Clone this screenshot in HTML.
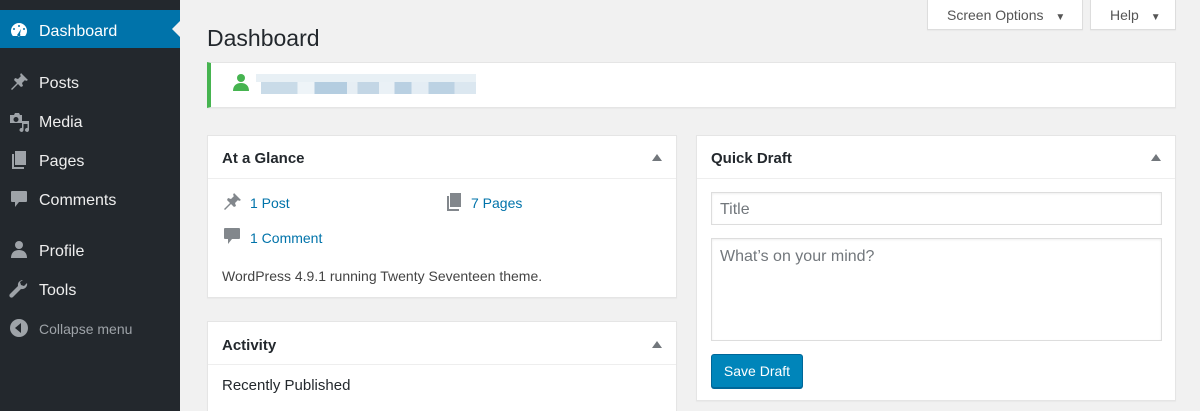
<!DOCTYPE html>
<html style="height:411px;overflow:hidden"><head><style>
*{margin:0;padding:0;box-sizing:border-box}
body{width:1200px;height:411px;overflow:hidden;background:#f1f1f1;font-family:"Liberation Sans",sans-serif;position:relative;color:#23282d}
.a{position:absolute}
#side{left:0;top:0;width:180px;height:411px;background:#23282d}
.mi{position:absolute;left:39px;color:#eee;font-size:16px}
.ic{position:absolute;left:9px;fill:#9ea3a8}
.box{position:absolute;background:#fff;border:1px solid #e5e5e5;box-shadow:0 1px 1px rgba(0,0,0,.04)}
.hd{position:absolute;left:14px;font-size:15px;font-weight:bold;color:#23282d}
.line{position:absolute;left:0;right:0;height:1px;background:#eee}
.tri{position:absolute;width:0;height:0;border-left:5px solid transparent;border-right:5px solid transparent;border-bottom:7px solid #72777c}
.lk{position:absolute;color:#0073aa;font-size:14px}
.btn{position:absolute;background:#fff;border:1px solid #ddd;border-top:none;color:#555;font-size:14px;box-shadow:0 1px 1px rgba(0,0,0,.04)}
</style></head><body>
<div id="side" class="a">
 <div class="a" style="left:0;top:10px;width:180px;height:38px;background:#0073aa"></div>
 <div class="a" style="left:172px;top:21px;width:0;height:0;border-top:8px solid transparent;border-bottom:8px solid transparent;border-right:8px solid #f1f1f1"></div>
 <svg class="ic" style="top:20px;fill:#fff" width="20" height="20" viewBox="0 0 20 20"><path d="M10 3a8 8 0 0 0-8 8c0 2 .7 3.7 1.9 5h12.2A8 8 0 0 0 18 11a8 8 0 0 0-8-8zm0 2a1 1 0 1 1 0 2 1 1 0 0 1 0-2zM5 8a1 1 0 1 1 0 2 1 1 0 0 1 0-2zm10 0a1 1 0 1 1 0 2 1 1 0 0 1 0-2zm-3 1l-1 5a1.5 1.5 0 1 1-2-.3z"/></svg>
 <div class="mi" style="top:23px;color:#fff">Dashboard</div>
 <svg class="ic" style="top:72px" width="20" height="20" viewBox="0 0 20 20"><path d="M12 1l7 7-2 1-1-1-3 3 1 3-2 1-3-3-6 6-1-1 6-6-3-3 1-2 3 1 3-3-1-1z"/></svg>
 <div class="mi" style="top:75px">Posts</div>
 <svg class="ic" style="top:111px" width="22" height="22" viewBox="0 0 22 22"><path d="M1 4h4l1-2h4l1 2h2v8H1zM7 6a2.5 2.5 0 1 0 0 5 2.5 2.5 0 0 0 0-5zM13 10h7v9a2 2 0 1 1-1.5-2V13h-4v6a2 2 0 1 1-1.5-2z"/></svg>
 <div class="mi" style="top:114px">Media</div>
 <svg class="ic" style="top:150px" width="20" height="20" viewBox="0 0 20 20"><path d="M6 1h11v14H6zM3 4h2v13h10v2H3z"/></svg>
 <div class="mi" style="top:153px">Pages</div>
 <svg class="ic" style="top:189px" width="20" height="20" viewBox="0 0 20 20"><path d="M3 2h14a1 1 0 0 1 1 1v9a1 1 0 0 1-1 1h-7l-4 5v-5H3a1 1 0 0 1-1-1V3a1 1 0 0 1 1-1z"/></svg>
 <div class="mi" style="top:192px">Comments</div>
 <svg class="ic" style="top:240px" width="20" height="20" viewBox="0 0 20 20"><circle cx="10" cy="5" r="4"/><path d="M2 18c0-5 3-8 8-8s8 3 8 8z"/></svg>
 <div class="mi" style="top:243px">Profile</div>
 <svg class="ic" style="top:279px" width="20" height="20" viewBox="0 0 20 20"><path d="M14 1a5 5 0 0 0-5 6L1 15a2 2 0 0 0 3 3l8-8a5 5 0 0 0 6-6l-3 3-3-1-1-3z"/></svg>
 <div class="mi" style="top:282px">Tools</div>
 <svg class="ic" style="top:318px" width="20" height="20" viewBox="0 0 20 20"><circle cx="10" cy="10" r="9"/><path d="M12 5v10L6 10z" fill="#23282d"/></svg>
 <div class="mi" style="top:321px;font-size:14px;color:#9ea3a8">Collapse menu</div>
</div>

<div class="btn" style="left:927px;top:0;width:156px;height:30px;padding:7px 0 0 19px">Screen Options <span style="font-size:10px;margin-left:8px">▼</span></div>
<div class="btn" style="left:1090px;top:0;width:86px;height:30px;padding:7px 0 0 19px">Help <span style="font-size:10px;margin-left:8px">▼</span></div>

<div class="a" style="left:207px;top:25px;font-size:23px;color:#23282d">Dashboard</div>

<div class="box" style="left:207px;top:62px;width:969px;height:46px;border-left:4px solid #46b450">
 <svg class="a" style="left:21px;top:10px" width="18" height="20" viewBox="0 0 18 20"><circle cx="9" cy="5" r="4" fill="#46b450"/><path d="M1 18c0-5 3-8 8-8s8 3 8 8z" fill="#46b450"/></svg>
 <div class="a" style="left:45px;top:11px;width:220px;height:8px;background:#e8f0f5"></div>
 <div class="a" style="left:50px;top:19px;width:215px;height:12px;background:linear-gradient(90deg,#c9dbe8 0 17%,#eef4f8 17% 25%,#b4cde0 25% 40%,#e6eef4 40% 45%,#c3d6e5 45% 55%,#eaf1f6 55% 62%,#b9d0e2 62% 70%,#e4edf4 70% 78%,#bcd2e3 78% 90%,#dbe7f0 90%)"></div>
</div>

<div class="box" style="left:207px;top:135px;width:470px;height:163px">
 <div class="hd" style="top:14px">At a Glance</div>
 <div class="tri" style="left:444px;top:18px"></div>
 <div class="line" style="top:42px"></div>
 <svg class="a" style="left:14px;top:56px;fill:#82878c" width="20" height="20" viewBox="0 0 20 20"><path d="M12 1l7 7-2 1-1-1-3 3 1 3-2 1-3-3-6 6-1-1 6-6-3-3 1-2 3 1 3-3-1-1z"/></svg>
 <div class="lk" style="left:42px;top:59px">1 Post</div>
 <svg class="a" style="left:236px;top:56px;fill:#82878c" width="20" height="20" viewBox="0 0 20 20"><path d="M6 1h11v14H6zM3 4h2v13h10v2H3z"/></svg>
 <div class="lk" style="left:263px;top:59px">7 Pages</div>
 <svg class="a" style="left:14px;top:90px;fill:#82878c" width="20" height="20" viewBox="0 0 20 20"><path d="M3 2h14a1 1 0 0 1 1 1v9a1 1 0 0 1-1 1h-7l-4 5v-5H3a1 1 0 0 1-1-1V3a1 1 0 0 1 1-1z"/></svg>
 <div class="lk" style="left:42px;top:94px">1 Comment</div>
 <div class="a" style="left:14px;top:132px;font-size:14px;color:#444">WordPress 4.9.1 running Twenty Seventeen theme.</div>
</div>

<div class="box" style="left:207px;top:321px;width:470px;height:100px">
 <div class="hd" style="top:15px">Activity</div>
 <div class="tri" style="left:444px;top:19px"></div>
 <div class="line" style="top:42px"></div>
 <div class="a" style="left:14px;top:55px;font-size:15px;color:#23282d">Recently Published</div>
</div>

<div class="box" style="left:696px;top:135px;width:480px;height:266px">
 <div class="hd" style="top:14px">Quick Draft</div>
 <div class="tri" style="left:454px;top:18px"></div>
 <div class="line" style="top:42px"></div>
 <div class="a" style="left:14px;top:56px;width:451px;height:33px;border:1px solid #ddd;box-shadow:inset 0 1px 2px rgba(0,0,0,.07);padding:8px 8px;font-size:16px;color:#72777c">Title</div>
 <div class="a" style="left:14px;top:102px;width:451px;height:103px;border:1px solid #ddd;box-shadow:inset 0 1px 2px rgba(0,0,0,.07);padding:9px 8px;font-size:16px;color:#72777c">What’s on your mind?</div>
 <div class="a" style="left:14px;top:218px;width:92px;height:34px;background:#0085ba;border:1px solid #006799;border-radius:3px;color:#fff;font-size:14px;text-align:center;line-height:33px;box-shadow:0 1px 0 #006799">Save Draft</div>
</div>
</body></html>
